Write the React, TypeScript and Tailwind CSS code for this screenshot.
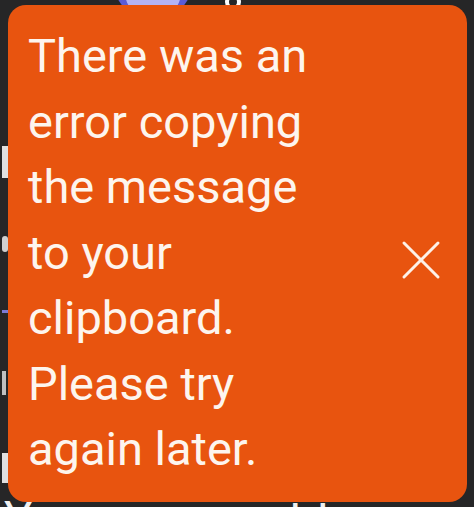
import React from "react";

const CloseIcon = () => (
  <svg width="40" height="40" viewBox="0 0 40 40" fill="none" stroke="currentColor" strokeWidth={3} strokeLinecap="round">
    <path d="M3 3 L37 37" />
    <path d="M37 3 L3 37" />
  </svg>
);

export default function App() {
  return (
    <div
      className="relative w-[474px] h-[507px] overflow-hidden bg-[#262627] text-white"
      style={{ fontFamily: "Roboto, 'Noto Sans', sans-serif" }}
    >
      {/* chat content behind the toast */}
      <div className="flex flex-col h-full">
        <div className="flex items-start h-[20px] pl-[113px] gap-[32px]">
          <div className="w-[80px] h-[80px] -mt-[60px] rounded-full bg-[#5b5bd6] flex items-end justify-center">
            <div className="w-[56px] h-[56px] rounded-full bg-[#b3b3f5]" />
          </div>
          <div className="w-[16px] h-[16px] -mt-[6px] rounded-full border-[4px] border-white" />
        </div>
        <div className="flex flex-col pl-[2px] pt-[126px] gap-[58px] text-[40px] leading-none">
          <span className="w-[6px] h-[32px] bg-[#e0e0e0]" />
          <span className="w-[6px] h-[16px] bg-[#d0d0d0] rounded-full" />
          <span className="w-[6px] h-[3px] bg-[#7b7bd6]" />
          <span className="w-[4px] h-[24px] bg-[#c0c0c0]" />
          <span className="w-[6px] h-[30px] bg-[#e0e0e0]" />
        </div>
        <div className="mt-auto pl-[4px] -mb-[36px] text-[48px] leading-none text-[#f0f0f0]">
          You may want to
        </div>
      </div>

      {/* toast */}
      <div className="absolute left-[8px] top-[5px] w-[459px] h-[497px] rounded-[18px] bg-[#e8540f] flex items-start pl-[20px] pr-[26px] pt-[18px]">
        <p className="flex-1 text-[47px] leading-[65.5px] text-[#fdf5ee]">
          There was an
          <br />
          error copying
          <br />
          the message
          <br />
          to your
          <br />
          clipboard.
          <br />
          Please try
          <br />
          again later.
        </p>
        <button className="text-[#fdf1e8] flex items-center justify-center self-center -mt-[6px]">
          <CloseIcon />
        </button>
      </div>
    </div>
  );
}
